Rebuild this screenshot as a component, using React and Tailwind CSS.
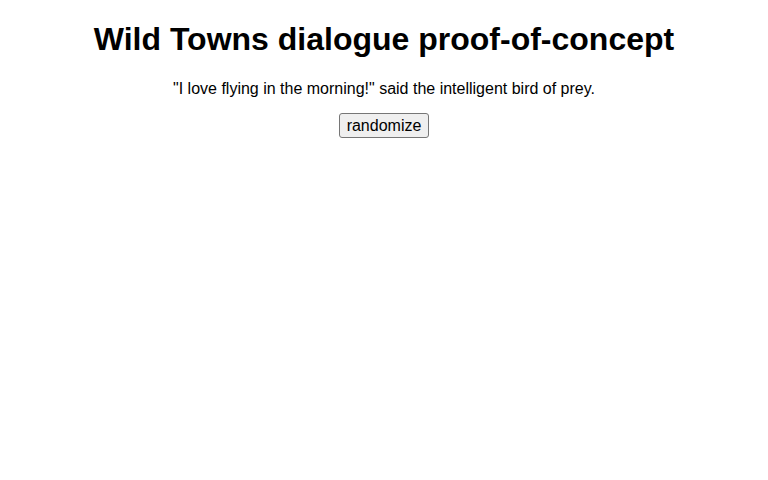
export default function App() {
  return (
    <div className="text-center text-black bg-white min-h-screen" style={{ fontFamily: '"Liberation Sans", Arial, sans-serif' }}>
      <div className="pt-[21px]">
        <h1 className="text-[32px] font-bold leading-[37px]">Wild Towns dialogue proof-of-concept</h1>
        <p className="mt-[22px] text-base leading-[18px]">
          "I love flying in the morning!" said the intelligent bird of prey.
        </p>
        <div className="mt-[15px]">
          <button className="px-[7px] py-[2px] text-base leading-[19px] bg-[#efefef] border border-[#767676] rounded-[3px] hover:bg-[#e5e5e5]">
            randomize
          </button>
        </div>
      </div>
    </div>
  );
}
